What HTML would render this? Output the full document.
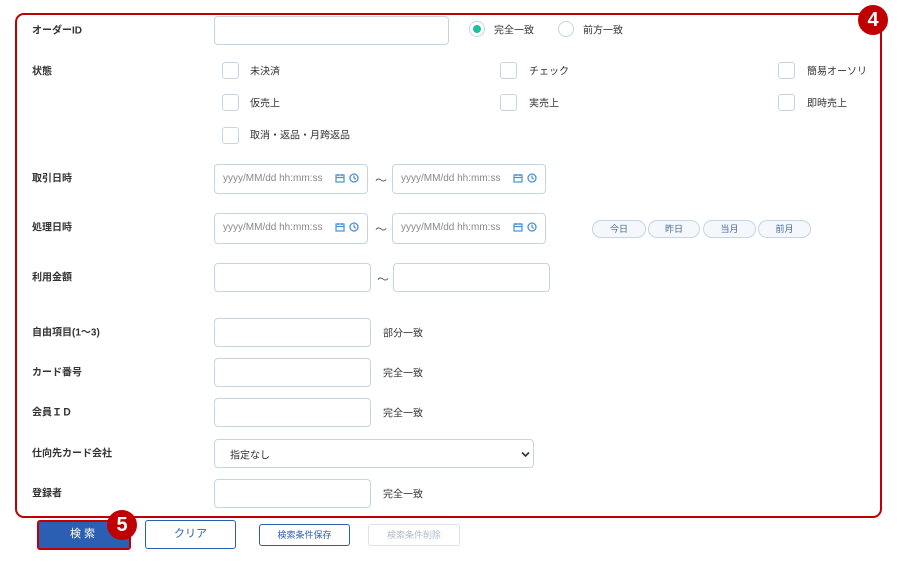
<!DOCTYPE html>
<html><head><meta charset="utf-8"><style>
*{box-sizing:border-box;margin:0;padding:0}
body{width:904px;height:572px;background:#fff;position:relative;font-family:"Liberation Sans","Noto Sans CJK JP",sans-serif;color:#333;font-size:11px;overflow:hidden}
.a{position:absolute}
.lbl{position:absolute;left:32px;font-weight:bold;font-size:10px;color:#333;transform:translateY(-50%)}
.t{position:absolute;font-size:10px;color:#333;transform:translateY(-50%);white-space:nowrap}
.in{position:absolute;border:1px solid #c5d5e2;border-radius:4px;background:#fff}
.cb{position:absolute;width:17px;height:17px;border:1px solid #c5d5e2;border-radius:3px}
.dt{font-size:10px;color:#888;padding-left:8px;line-height:28px}
.ic{position:absolute;top:7px;width:10px;height:10px}
.pill{position:absolute;top:220px;height:18px;border:1px solid #c5d5e2;border-radius:9px;background:#f4f8fc;font-size:9px;color:#4a6a90;text-align:center;line-height:16px}
.badge{position:absolute;width:30px;height:30px;border-radius:50%;background:#c00000;color:#fff;font-weight:bold;font-size:20px;text-align:center;line-height:30px}
</style></head><body>
<div class="a" style="left:15px;top:13px;width:867px;height:505px;border:2.5px solid #c00000;border-radius:9px"></div>

<div class="lbl" style="top:29px">オーダーID</div>
<div class="in" style="left:214px;top:16px;width:235px;height:29px"></div>
<div class="a" style="left:469px;top:21px;width:16px;height:16px;border:1px solid #c5d5e2;border-radius:50%"><div class="a" style="left:3px;top:3px;width:8px;height:8px;border-radius:50%;background:#1bc29b"></div></div>
<div class="t" style="left:494px;top:29px">完全一致</div>
<div class="a" style="left:558px;top:21px;width:16px;height:16px;border:1px solid #c5d5e2;border-radius:50%"></div>
<div class="t" style="left:583px;top:29px">前方一致</div>

<div class="lbl" style="top:70px">状態</div>
<div class="cb" style="left:222px;top:62px"></div><div class="t" style="left:250px;top:70px">未決済</div>
<div class="cb" style="left:222px;top:94px"></div><div class="t" style="left:250px;top:102px">仮売上</div>
<div class="cb" style="left:222px;top:127px"></div><div class="t" style="left:250px;top:134px">取消・返品・月跨返品</div>
<div class="cb" style="left:500px;top:62px"></div><div class="t" style="left:529px;top:70px">チェック</div>
<div class="cb" style="left:500px;top:94px"></div><div class="t" style="left:529px;top:102px">実売上</div>
<div class="cb" style="left:778px;top:62px"></div><div class="t" style="left:807px;top:70px">簡易オーソリ</div>
<div class="cb" style="left:778px;top:94px"></div><div class="t" style="left:807px;top:102px">即時売上</div>

<div class="lbl" style="top:177px">取引日時</div>
<div class="lbl" style="top:226px">処理日時</div>
<div class="lbl" style="top:276px">利用金額</div>
<div class="lbl" style="top:331px">自由項目(1〜3)</div>
<div class="lbl" style="top:371px">カード番号</div>
<div class="lbl" style="top:411px">会員ＩＤ</div>
<div class="lbl" style="top:452px">仕向先カード会社</div>
<div class="lbl" style="top:492px">登録者</div>

<!-- date inputs -->
<div class="in dt" style="left:214px;top:164px;width:154px;height:30px">yyyy/MM/dd hh:mm:ss<svg class="ic" style="left:120px;top:8px" viewBox="0 0 10 10"><rect x="1" y="2" width="8" height="7" fill="none" stroke="#4a90d9" stroke-width="1.2"/><path d="M1 4.5H9M3 1V3M7 1V3" stroke="#4a90d9" stroke-width="1.2"/></svg><svg class="ic" style="left:134px;top:8px" viewBox="0 0 10 10"><circle cx="5" cy="5" r="4" fill="none" stroke="#4a90d9" stroke-width="1.3"/><path d="M5 2.5V5L6.8 6.2" fill="none" stroke="#4a90d9" stroke-width="1.2"/></svg></div>
<div class="t" style="left:375px;top:180px;font-size:12px;color:#555">～</div>
<div class="in dt" style="left:392px;top:164px;width:154px;height:30px">yyyy/MM/dd hh:mm:ss<svg class="ic" style="left:120px;top:8px" viewBox="0 0 10 10"><rect x="1" y="2" width="8" height="7" fill="none" stroke="#4a90d9" stroke-width="1.2"/><path d="M1 4.5H9M3 1V3M7 1V3" stroke="#4a90d9" stroke-width="1.2"/></svg><svg class="ic" style="left:134px;top:8px" viewBox="0 0 10 10"><circle cx="5" cy="5" r="4" fill="none" stroke="#4a90d9" stroke-width="1.3"/><path d="M5 2.5V5L6.8 6.2" fill="none" stroke="#4a90d9" stroke-width="1.2"/></svg></div>

<div class="in dt" style="left:214px;top:213px;width:154px;height:31px">yyyy/MM/dd hh:mm:ss<svg class="ic" style="left:120px;top:8px" viewBox="0 0 10 10"><rect x="1" y="2" width="8" height="7" fill="none" stroke="#4a90d9" stroke-width="1.2"/><path d="M1 4.5H9M3 1V3M7 1V3" stroke="#4a90d9" stroke-width="1.2"/></svg><svg class="ic" style="left:134px;top:8px" viewBox="0 0 10 10"><circle cx="5" cy="5" r="4" fill="none" stroke="#4a90d9" stroke-width="1.3"/><path d="M5 2.5V5L6.8 6.2" fill="none" stroke="#4a90d9" stroke-width="1.2"/></svg></div>
<div class="t" style="left:375px;top:229px;font-size:12px;color:#555">～</div>
<div class="in dt" style="left:392px;top:213px;width:154px;height:31px">yyyy/MM/dd hh:mm:ss<svg class="ic" style="left:120px;top:8px" viewBox="0 0 10 10"><rect x="1" y="2" width="8" height="7" fill="none" stroke="#4a90d9" stroke-width="1.2"/><path d="M1 4.5H9M3 1V3M7 1V3" stroke="#4a90d9" stroke-width="1.2"/></svg><svg class="ic" style="left:134px;top:8px" viewBox="0 0 10 10"><circle cx="5" cy="5" r="4" fill="none" stroke="#4a90d9" stroke-width="1.3"/><path d="M5 2.5V5L6.8 6.2" fill="none" stroke="#4a90d9" stroke-width="1.2"/></svg></div>

<div class="pill" style="left:592px;width:54px">今日</div>
<div class="pill" style="left:648px;width:52px">昨日</div>
<div class="pill" style="left:703px;width:53px">当月</div>
<div class="pill" style="left:758px;width:53px">前月</div>

<div class="in" style="left:214px;top:263px;width:157px;height:29px"></div>
<div class="t" style="left:377px;top:279px;font-size:12px;color:#555">～</div>
<div class="in" style="left:393px;top:263px;width:157px;height:29px"></div>

<div class="in" style="left:214px;top:318px;width:157px;height:29px"></div><div class="t" style="left:383px;top:332px">部分一致</div>
<div class="in" style="left:214px;top:358px;width:157px;height:29px"></div><div class="t" style="left:383px;top:372px">完全一致</div>
<div class="in" style="left:214px;top:398px;width:157px;height:29px"></div><div class="t" style="left:383px;top:412px">完全一致</div>
<div class="in" style="left:214px;top:439px;width:320px;height:29px"><div class="t" style="left:15px;top:14px">指定なし</div><svg class="a" style="left:306px;top:11px" width="9" height="7" viewBox="0 0 9 7"><path d="M1 1.5L4.5 5L8 1.5" fill="none" stroke="#333" stroke-width="1.6"/></svg></div>
<div class="in" style="left:214px;top:479px;width:157px;height:29px"></div><div class="t" style="left:383px;top:493px">完全一致</div>

<div class="a" style="left:37px;top:520px;width:94px;height:30px;background:#2b5fb4;border:2.5px solid #c00000;border-radius:3px;color:#fff;font-size:11px;text-align:center;line-height:25px;letter-spacing:3px">検索</div>
<div class="a" style="left:145px;top:520px;width:91px;height:29px;border:1px solid #2b5fb4;border-radius:3px;color:#2b5fb4;font-size:11px;text-align:center;line-height:27px">クリア</div>
<div class="a" style="left:259px;top:524px;width:91px;height:22px;border:1px solid #2b5fb4;border-radius:3px;color:#2b5fb4;font-size:9px;text-align:center;line-height:20px">検索条件保存</div>
<div class="a" style="left:368px;top:524px;width:92px;height:22px;border:1px solid #dde3ea;border-radius:3px;color:#b0bccb;font-size:9px;text-align:center;line-height:20px">検索条件削除</div>

<div class="badge" style="left:858px;top:5px">4</div>
<div class="badge" style="left:107px;top:510px">5</div>
</body></html>
